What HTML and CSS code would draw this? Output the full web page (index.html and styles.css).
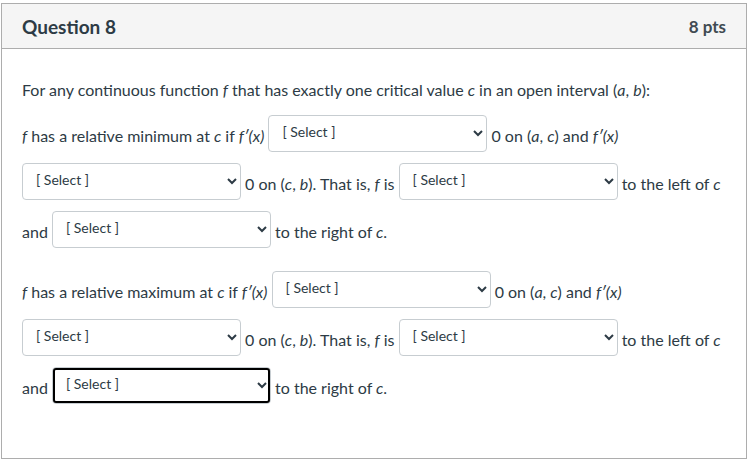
FILE: index.html
```html
<!DOCTYPE html>
<html lang="en">
<head>
    <meta charset="UTF-8">
    <meta name="viewport" content="width=device-width, initial-scale=1.0">
    <title>Question 8</title>
    <link rel="stylesheet" href="styles.css">
</head>
<body>
    <div class="question">
        <div class="question-header">
            <span class="question-name">Question 8</span>
            <span class="question-points">8 pts</span>
        </div>
        <div class="question-text">
            <p>For any continuous function <i>f</i> that has exactly one critical value <i>c</i> in an open interval (<i>a</i>, <i>b</i>):</p>
            <p><i>f</i> has a relative minimum at <i>c</i> if <i>f′(x)</i>
                <select class="answer-select">
                    <option>[ Select ]</option>
                    <option>&lt;</option>
                    <option>&gt;</option>
                </select>
                0 on (<i>a</i>, <i>c</i>) and <i>f′(x)</i>
                <select class="answer-select">
                    <option>[ Select ]</option>
                    <option>&lt;</option>
                    <option>&gt;</option>
                </select>
                0 on (<i>c</i>, <i>b</i>). That is, <i>f</i> is
                <select class="answer-select">
                    <option>[ Select ]</option>
                    <option>increasing</option>
                    <option>decreasing</option>
                </select>
                to the left of <i>c</i> and
                <select class="answer-select">
                    <option>[ Select ]</option>
                    <option>increasing</option>
                    <option>decreasing</option>
                </select>
                to the right of <i>c</i>.</p>
            <p><i>f</i> has a relative maximum at <i>c</i> if <i>f′(x)</i>
                <select class="answer-select">
                    <option>[ Select ]</option>
                    <option>&lt;</option>
                    <option>&gt;</option>
                </select>
                0 on (<i>a</i>, <i>c</i>) and <i>f′(x)</i>
                <select class="answer-select">
                    <option>[ Select ]</option>
                    <option>&lt;</option>
                    <option>&gt;</option>
                </select>
                0 on (<i>c</i>, <i>b</i>). That is, <i>f</i> is
                <select class="answer-select">
                    <option>[ Select ]</option>
                    <option>increasing</option>
                    <option>decreasing</option>
                </select>
                to the left of <i>c</i> and
                <select class="answer-select focused">
                    <option>[ Select ]</option>
                    <option>increasing</option>
                    <option>decreasing</option>
                </select>
                to the right of <i>c</i>.</p>
        </div>
    </div>
</body>
</html>
```

FILE: styles.css
```css
* {
    margin: 0;
    padding: 0;
    box-sizing: border-box;
}
body {
    font-family: Lato, "Open Sans", sans-serif;
    color: #2d3b45;
    background: #fff;
}
.question {
    margin: 3px 5px 0 1px;
    border: 1px solid #adadad;
}
.question-header {
    height: 45px;
    padding: 0 20px;
    display: flex;
    justify-content: space-between;
    align-items: center;
    background: #f5f5f5;
    border-bottom: 1px solid #adadad;
}
.question-name {
    font-size: 19px;
    font-weight: bold;
}
.question-points {
    font-size: 17px;
    font-weight: bold;
    color: #3f4a52;
}
.question-text {
    padding: 18px 14px 32px 20px;
    font-size: 16px;
    line-height: 22.5px;
}
.question-text p {
    margin: 12px 0;
}
.answer-select {
    width: 219px;
    height: 37px;
    margin: 1px 0 10px;
    padding: 0 8px 3px 9px;
    vertical-align: middle;
    font-family: Lato, "Open Sans", sans-serif;
    font-size: 14px;
    color: #2d3b45;
    background: #fff;
    border: 1px solid #c7cdd1;
    border-radius: 4px;
}
.answer-select.focused {
    outline: 2px solid #000;
    outline-offset: -3px;
}
```
